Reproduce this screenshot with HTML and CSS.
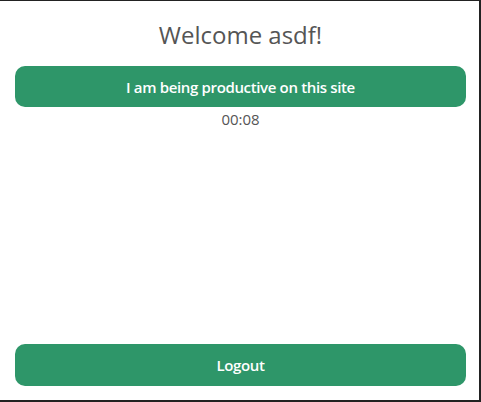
FILE: index.html
```html
<!DOCTYPE html>
<html lang="en">
<head>
    <meta charset="UTF-8">
    <meta name="viewport" content="width=device-width, initial-scale=1.0">
    <title>Productivity</title>
    <link rel="stylesheet" href="styles.css">
</head>
<body>
    <div class="popup">
        <h1 class="welcome">Welcome asdf!</h1>
        <button class="btn" id="productive">I am being productive on this site</button>
        <div class="timer" id="timer">00:08</div>
        <div class="spacer"></div>
        <button class="btn" id="logout">Logout</button>
    </div>
</body>
</html>
```

FILE: styles.css
```css
* {
    margin: 0;
    padding: 0;
    box-sizing: border-box;
}
html, body {
    height: 100%;
}
body {
    background-color: #fff;
    font-family: "Open Sans", "Noto Sans", sans-serif;
    color: #555;
}
.popup {
    height: 100%;
    display: flex;
    flex-direction: column;
    padding: 0 13px 14px 15px;
    border-top: 1px solid #222;
    border-right: 2px solid #222;
    border-bottom: 2px solid #222;
}
.welcome {
    font-size: 24px;
    font-weight: 400;
    text-align: center;
    line-height: 32px;
    margin-top: 18px;
    margin-bottom: 15px;
}
.btn {
    height: 41px;
    width: 100%;
    background-color: #2e9669;
    color: #fff;
    border: none;
    border-radius: 10px;
    font-family: inherit;
    font-size: 15px;
    font-weight: 600;
    letter-spacing: -0.35px;
    cursor: pointer;
}
#logout {
    height: 42px;
}
.timer {
    text-align: center;
    font-size: 15px;
    line-height: 20px;
    margin-top: 2px;
}
.spacer {
    flex: 1;
}
```
